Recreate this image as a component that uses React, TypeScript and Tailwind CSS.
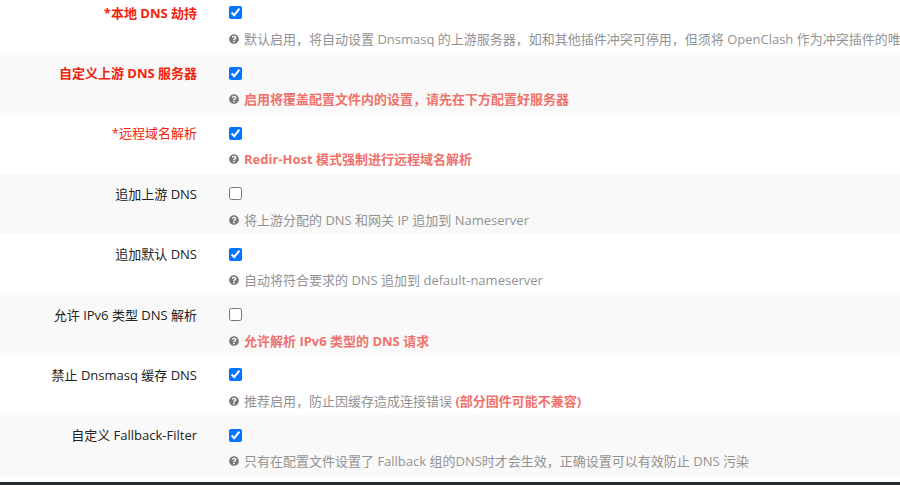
import React from 'react';
import { FaQuestionCircle } from 'react-icons/fa';

interface Row {
  label: string;
  labelTone: 'red-bold' | 'red' | 'normal';
  checked: boolean;
  help: React.ReactNode;
  helpTone: 'gray' | 'red';
}

const rows: Row[] = [
  {
    label: '*本地 DNS 劫持',
    labelTone: 'red-bold',
    checked: true,
    helpTone: 'gray',
    help: '默认启用，将自动设置 Dnsmasq 的上游服务器，如和其他插件冲突可停用，但须将 OpenClash 作为冲突插件的唯一上游服务器',
  },
  {
    label: '自定义上游 DNS 服务器',
    labelTone: 'red-bold',
    checked: true,
    helpTone: 'red',
    help: '启用将覆盖配置文件内的设置，请先在下方配置好服务器',
  },
  {
    label: '*远程域名解析',
    labelTone: 'red',
    checked: true,
    helpTone: 'red',
    help: 'Redir-Host 模式强制进行远程域名解析',
  },
  {
    label: '追加上游 DNS',
    labelTone: 'normal',
    checked: false,
    helpTone: 'gray',
    help: '将上游分配的 DNS 和网关 IP 追加到 Nameserver',
  },
  {
    label: '追加默认 DNS',
    labelTone: 'normal',
    checked: true,
    helpTone: 'gray',
    help: '自动将符合要求的 DNS 追加到 default-nameserver',
  },
  {
    label: '允许 IPv6 类型 DNS 解析',
    labelTone: 'normal',
    checked: false,
    helpTone: 'red',
    help: '允许解析 IPv6 类型的 DNS 请求',
  },
  {
    label: '禁止 Dnsmasq 缓存 DNS',
    labelTone: 'normal',
    checked: true,
    helpTone: 'gray',
    help: (
      <>
        推荐启用，防止因缓存造成连接错误{' '}
        <span className="font-bold text-[#f0716b]">(部分固件可能不兼容)</span>
      </>
    ),
  },
  {
    label: '自定义 Fallback-Filter',
    labelTone: 'normal',
    checked: true,
    helpTone: 'gray',
    help: '只有在配置文件设置了 Fallback 组的DNS时才会生效，正确设置可以有效防止 DNS 污染',
  },
];

const labelClass = {
  'red-bold': 'text-[#f2220c] font-bold',
  red: 'text-[#f2220c]',
  normal: 'text-[#222]',
};

const App: React.FC = () => {
  return (
    <div
      className="w-[900px] h-[485px] overflow-hidden bg-white flex flex-col text-[13px]"
      style={{ fontFamily: '"Open Sans", "Noto Sans CJK SC", sans-serif' }}
    >
      <div className="-mt-[7.4px] flex flex-col">
        {rows.map((row, i) => (
          <div
            key={i}
            className={`h-[60.4px] flex shrink-0 ${i % 2 === 1 ? 'bg-[#f9f9f9]' : 'bg-white'}`}
          >
            <div className={`w-[197px] shrink-0 text-right pt-[10px] leading-[20px] whitespace-nowrap ${labelClass[row.labelTone]}`}>
              {row.label}
            </div>
            <div className="ml-[32px] flex-1 min-w-0 flex flex-col pt-[10px]">
              <div className="h-[20px] flex items-center">
                <input
                  type="checkbox"
                  defaultChecked={row.checked}
                  className="m-0 w-[13px] h-[13px]"
                />
              </div>
              <div
                className={`mt-[6px] h-[20px] leading-[20px] flex items-center whitespace-nowrap overflow-hidden ${
                  row.helpTone === 'red' ? 'text-[#f0716b] font-bold' : 'text-[#929292]'
                }`}
              >
                <FaQuestionCircle className="w-[10px] h-[10px] text-[#777] shrink-0 mr-[5px]" />
                <span>{row.help}</span>
              </div>
            </div>
          </div>
        ))}
      </div>
      <div className="flex-1" />
      <div className="h-[3px] bg-[#252d33] shrink-0" />
    </div>
  );
};

export default App;
